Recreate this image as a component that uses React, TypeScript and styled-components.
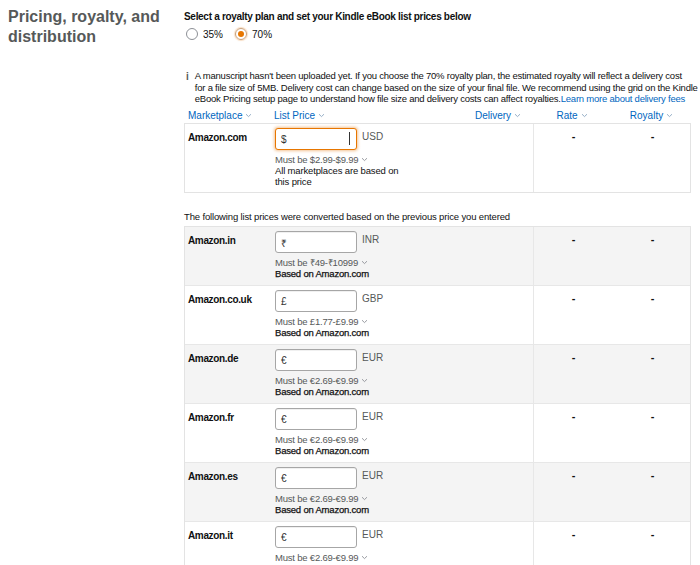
import styled, { createGlobalStyle } from 'styled-components'

const GlobalStyle = createGlobalStyle`
  html, body {
    margin: 0;
    padding: 0;
    background: #ffffff;
  }
  body {
    font-family: "Liberation Sans", Arial, sans-serif;
    color: #0f1111;
  }
  * {
    box-sizing: border-box;
  }
`

interface IMarket {
  name: string
  symbol: string
  currency: string
  range: string
}

const converted: IMarket[] = [
  { name: 'Amazon.in', symbol: '₹', currency: 'INR', range: '₹49-₹10999' },
  { name: 'Amazon.co.uk', symbol: '£', currency: 'GBP', range: '£1.77-£9.99' },
  { name: 'Amazon.de', symbol: '€', currency: 'EUR', range: '€2.69-€9.99' },
  { name: 'Amazon.fr', symbol: '€', currency: 'EUR', range: '€2.69-€9.99' },
  { name: 'Amazon.es', symbol: '€', currency: 'EUR', range: '€2.69-€9.99' },
  { name: 'Amazon.it', symbol: '€', currency: 'EUR', range: '€2.69-€9.99' },
]

const columns = [
  { label: 'Marketplace', align: 'left' },
  { label: 'List Price', align: 'left' },
  { label: 'Delivery', align: 'center' },
  { label: 'Rate', align: 'center' },
  { label: 'Royalty', align: 'center' },
]

function Chevron({ color = '#8d9096' }: { color?: string }) {
  return (
    <svg width="7" height="5" viewBox="0 0 7 5" style={{ marginLeft: 3, verticalAlign: 'middle' }}>
      <path d="M1 1.2 L3.5 3.6 L6 1.2" fill="none" stroke={color} strokeWidth="0.9" />
    </svg>
  )
}

function PriceCell({ symbol, currency, range, focused, note }: { symbol: string; currency: string; range: string; focused?: boolean; note: React.ReactNode }) {
  return (
    <PriceWrap>
      <InputLine>
        <PriceBox $focused={focused}>
          <span>{symbol}</span>
          {focused && <Caret />}
        </PriceBox>
        <Currency>{currency}</Currency>
      </InputLine>
      <Range>
        Must be {range}
        <Chevron />
      </Range>
      {note}
    </PriceWrap>
  )
}

export default function App() {
  return (
    <>
      <GlobalStyle />
      <Page>
        <SideTitle>Pricing, royalty, and distribution</SideTitle>
        <Content>
          <Heading>Select a royalty plan and set your Kindle eBook list prices below</Heading>
          <RadioRow>
            <RadioOption>
              <Radio />
              35%
            </RadioOption>
            <RadioOption>
              <Radio $checked />
              70%
            </RadioOption>
          </RadioRow>

          <Info>
            <InfoIcon>i</InfoIcon>
            <p>
              A manuscript hasn't been uploaded yet. If you choose the 70% royalty plan, the estimated royalty will
              reflect a delivery cost
              <br />
              for a file size of 5MB. Delivery cost can change based on the size of your final file. We recommend using
              the grid on the Kindle
              <br />
              eBook Pricing setup page to understand how file size and delivery costs can affect royalties.
              <a>Learn more about delivery fees</a>
            </p>
          </Info>

          <HeaderRow>
            {columns.map((c) => (
              <HeaderCell key={c.label} $align={c.align}>
                {c.label}
                <Chevron color="#8aa6c1" />
              </HeaderCell>
            ))}
          </HeaderRow>

          <Table>
            <Row $tall>
              <NameCell>Amazon.com</NameCell>
              <PriceCell
                symbol="$"
                currency="USD"
                range="$2.99-$9.99"
                focused
                note={<Note>All marketplaces are based on this price</Note>}
              />
              <div />
              <RateCell>-</RateCell>
              <RoyaltyCell>-</RoyaltyCell>
            </Row>
          </Table>

          <ConvertedText>The following list prices were converted based on the previous price you entered</ConvertedText>

          <Table>
            {converted.map((m, i) => (
              <Row key={m.name} $shaded={i % 2 === 0}>
                <NameCell>{m.name}</NameCell>
                <PriceCell
                  symbol={m.symbol}
                  currency={m.currency}
                  range={m.range}
                  note={<BasedOn>Based on Amazon.com</BasedOn>}
                />
                <div />
                <RateCell>-</RateCell>
                <RoyaltyCell>-</RoyaltyCell>
              </Row>
            ))}
          </Table>
        </Content>
      </Page>
    </>
  )
}

const GRID = '82px 198px 68px 80px 79px'

const Page = styled.div`
  display: flex;
  flex-direction: row;
  padding: 7px 0 0 8px;
  width: 700px;
  height: 565px;
  overflow: hidden;
`

const SideTitle = styled.h2`
  color: #565959;
  font-size: 16px;
  font-weight: 700;
  line-height: 20px;
  margin: 0;
  width: 176px;
  padding-right: 16px;
`

const Content = styled.div`
  display: flex;
  flex-direction: column;
  width: 507px;
`

const Heading = styled.p`
  font-size: 10px;
  font-weight: 700;
  letter-spacing: -0.3px;
  line-height: 14px;
  margin: 3px 0 0 0;
`

const RadioRow = styled.div`
  display: flex;
  flex-direction: row;
  gap: 12px;
  margin-top: 2px;
  padding-left: 2px;
`

const RadioOption = styled.label`
  align-items: center;
  display: flex;
  font-size: 10px;
  gap: 5px;
  height: 16px;
`

const Radio = styled.span<{ $checked?: boolean }>`
  border: 1px solid ${({ $checked }) => ($checked ? '#c8a07a' : '#8d9096')};
  border-radius: 50%;
  display: inline-block;
  height: 12px;
  position: relative;
  width: 12px;
  box-shadow: ${({ $checked }) => ($checked ? '0 0 1px 1px rgba(228,121,17,0.25)' : 'none')};

  &::after {
    background: #e77600;
    border-radius: 50%;
    content: '';
    display: ${({ $checked }) => ($checked ? 'block' : 'none')};
    height: 6px;
    left: 2px;
    position: absolute;
    top: 2px;
    width: 6px;
  }
`

const Info = styled.div`
  display: flex;
  flex-direction: row;
  font-size: 9.5px;
  gap: 6px;
  line-height: 11.5px;
  margin-top: 28px;
  padding-left: 2px;

  p {
    margin: 0;
    color: #0f1111;
    letter-spacing: -0.22px;
    white-space: nowrap;
  }

  a {
    color: #0066c0;
    cursor: pointer;
  }
`

const InfoIcon = styled.span`
  color: #565959;
  font-size: 10px;
  font-weight: 700;
  line-height: 13px;
  width: 5px;
`

const HeaderRow = styled.div`
  display: grid;
  grid-template-columns: ${GRID};
  margin-top: 5px;
  height: 16px;
  align-items: center;
`

const HeaderCell = styled.div<{ $align: string }>`
  color: #0066c0;
  font-size: 10px;
  padding-left: ${({ $align }) => ($align === 'left' ? '4px' : '0')};
  text-align: ${({ $align }) => $align};
  white-space: nowrap;

  &:nth-child(2) {
    padding-left: 8px;
  }
`

const Table = styled.div`
  border: 1px solid #e3e3e3;
  display: flex;
  flex-direction: column;
  margin-top: 2px;
`

const Row = styled.div<{ $shaded?: boolean; $tall?: boolean }>`
  background: ${({ $shaded }) => ($shaded ? '#f4f4f4' : '#ffffff')};
  border-bottom: 1px solid #e7e7e7;
  display: grid;
  grid-template-columns: ${GRID};
  min-height: ${({ $tall }) => ($tall ? '68px' : '59px')};

  &:last-child {
    border-bottom: none;
  }
`

const NameCell = styled.div`
  font-size: 10px;
  font-weight: 700;
  letter-spacing: -0.35px;
  padding: 8px 0 0 3px;
`

const PriceWrap = styled.div`
  display: flex;
  flex-direction: column;
  padding: 4px 8px 5px 8px;
`

const InputLine = styled.div`
  align-items: flex-start;
  display: flex;
  flex-direction: row;
  gap: 5px;
`

const PriceBox = styled.div<{ $focused?: boolean }>`
  align-items: center;
  background: #ffffff;
  border: 1px solid ${({ $focused }) => ($focused ? '#e77600' : '#a6a6a6')};
  border-radius: 3px;
  box-shadow: ${({ $focused }) => ($focused ? '0 0 3px 1px rgba(228,121,17,0.45)' : 'inset 0 1px 0 rgba(0,0,0,0.06)')};
  display: flex;
  flex-direction: row;
  font-size: 10px;
  height: 22px;
  justify-content: space-between;
  padding: 0 6px 0 5px;
  width: 82px;
  color: #333;

  span {
    margin-top: 2px;
  }
`

const Caret = styled.i`
  background: #333;
  display: block;
  height: 13px;
  width: 1px;
`

const Currency = styled.span`
  color: #565959;
  font-size: 10px;
  line-height: 14px;
  margin-top: 2px;
`

const Range = styled.span`
  color: #565959;
  font-size: 9.5px;
  letter-spacing: -0.2px;
  line-height: 11px;
  margin-top: 4px;
`

const Note = styled.span`
  font-size: 9.5px;
  letter-spacing: -0.15px;
  line-height: 11px;
  width: 130px;
`

const BasedOn = styled.span`
  font-size: 9.5px;
  letter-spacing: -0.2px;
  line-height: 11px;
  color: #111;
  -webkit-text-stroke: 0.25px #111;
`

const RateCell = styled.div`
  border-left: 1px solid #e7e7e7;
  font-size: 11px;
  font-weight: 700;
  padding-top: 6px;
  text-align: center;
`

const RoyaltyCell = styled.div`
  font-size: 11px;
  font-weight: 700;
  padding-top: 6px;
  text-align: center;
`

const ConvertedText = styled.p`
  font-size: 9.5px;
  letter-spacing: -0.15px;
  line-height: 12px;
  margin: 18px 0 1px 0;
`
